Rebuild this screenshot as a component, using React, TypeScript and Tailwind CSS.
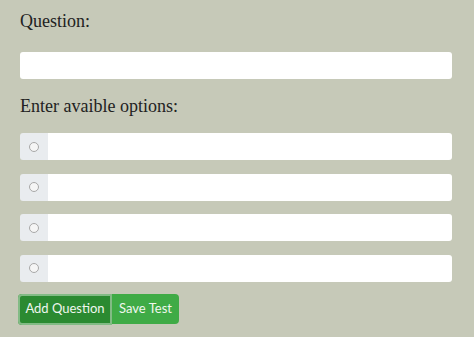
import React from "react";

export default function App() {
  const opts = [0, 1, 2, 3];
  return (
    <div className="w-[474px] h-[337px] bg-[#c6c9b8] overflow-hidden">
      <div className="pl-[20px] pr-[22px] pt-[9px]">
        <div className="font-['Liberation_Serif',serif] text-[18px] leading-[24px] text-[#222]">Question:</div>
        <div className="mt-[19px] h-[27px] bg-white rounded-[3px]" />
        <div className="mt-[15px] font-['Liberation_Serif',serif] text-[18px] leading-[24px] text-[#222]">Enter avaible options:</div>
        <div className="mt-[15px] flex flex-col gap-[13.5px]">
          {opts.map((i) => (
            <div key={i} className="flex h-[27px] rounded-[3px] overflow-hidden">
              <div className="w-[28px] bg-[#e9ecef] flex items-center justify-center">
                <div className="w-[10px] h-[10px] rounded-full border border-[#a8a8a8] bg-[#f5f5f5]" />
              </div>
              <div className="flex-1 bg-white" />
            </div>
          ))}
        </div>
        <div className="mt-[12px] -ml-[2px] flex">
          <button className="w-[94px] h-[31px] bg-[#2b8a31] text-[#f0f7ee] text-[13px] font-['Lato',sans-serif] rounded-l-[4px] ring-[2px] ring-inset ring-[#82bb85] flex items-center justify-center">
            Add Question
          </button>
          <button className="w-[67px] h-[30px] mt-[0.5px] bg-[#3fab46] text-[#f0f7ee] text-[13px] font-['Lato',sans-serif] rounded-r-[4px] flex items-center justify-center">
            Save Test
          </button>
        </div>
      </div>
    </div>
  );
}
